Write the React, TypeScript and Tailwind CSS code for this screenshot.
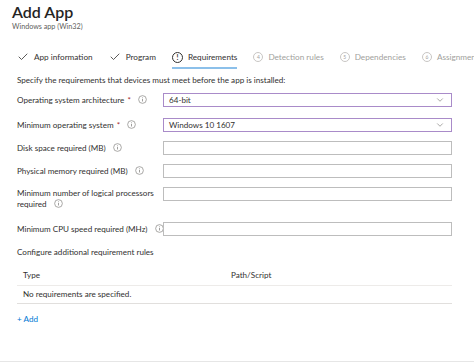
import { Check, ChevronDown } from "lucide-react";

const font = { fontFamily: '"Segoe UI", "Lato", "Noto Sans", sans-serif' };

function InfoIcon() {
  return (
    <svg width="9" height="9" viewBox="0 0 10 10" className="ml-[7px] inline-block shrink-0 align-[-1px]">
      <circle cx="5" cy="5" r="4.3" fill="none" stroke="#8a8886" strokeWidth="0.8" />
      <line x1="5" y1="4.3" x2="5" y2="7.2" stroke="#8a8886" strokeWidth="0.9" />
      <circle cx="5" cy="3" r="0.55" fill="#8a8886" />
    </svg>
  );
}

function StepCircle({ n }: { n: string }) {
  return (
    <span className="flex h-[10px] w-[10px] items-center justify-center rounded-full border border-[#c8c6c4] text-[5px] leading-none text-[#a19f9d]">
      {n}
    </span>
  );
}

function Tab({
  icon,
  label,
  active,
  muted,
}: {
  icon: React.ReactNode;
  label: string;
  active?: boolean;
  muted?: boolean;
}) {
  return (
    <div className="relative flex shrink-0 items-center gap-[5px] whitespace-nowrap">
      {icon}
      <span className={muted ? "text-[#a19f9d]" : "text-[#323130]"}>{label}</span>
      {active && (
        <span className="absolute -bottom-[5px] left-0 right-0 h-[2px] bg-[#8cc0ea]" />
      )}
    </div>
  );
}

function Row({
  label,
  required,
  field,
  className = "",
}: {
  label: string;
  required?: boolean;
  field: React.ReactNode;
  className?: string;
}) {
  return (
    <div className={`flex items-center ${className}`}>
      <div className="flex w-[146px] items-center whitespace-nowrap">
        <span>{label}</span>
        {required && <span className="ml-[3px] text-[#a4262c]">*</span>}
        <InfoIcon />
      </div>
      <div className="flex-1">{field}</div>
    </div>
  );
}

function Select({ value }: { value: string }) {
  return (
    <div className="flex h-[14px] items-center justify-between border border-[#a98bc9] pl-[5px] pr-[6px] text-[#323130]">
      <span>{value}</span>
      <ChevronDown size={10} strokeWidth={1.3} color="#605e5c" />
    </div>
  );
}

function Input() {
  return <div className="h-[14px] border border-[#bdbdbd] bg-white" />;
}

export default function App() {
  return (
    <div
      className="relative h-[363px] w-[474px] overflow-hidden bg-white text-[8.1px] text-[#323130]"
      style={font}
    >
      <div className="pl-[12px] pt-[2px]">
        <h1 className="text-[16px] font-semibold leading-[20px] text-[#252423]">Add App</h1>
        <p className="text-[7.2px] leading-[10px] text-[#605e5c]">Windows app (Win32)</p>
      </div>

      <div className="mt-[19px] flex h-[13px] items-center gap-[16px] pl-[17px] text-[8.2px]">
        <Tab icon={<Check size={12} strokeWidth={1.6} color="#323130" />} label="App information" />
        <Tab icon={<Check size={12} strokeWidth={1.6} color="#323130" />} label="Program" />
        <Tab
          active
          icon={
            <span className="flex h-[11px] w-[11px] items-center justify-center rounded-full border border-[#323130] text-[7px] font-bold leading-none">
              !
            </span>
          }
          label="Requirements"
        />
        <Tab muted icon={<StepCircle n="4" />} label="Detection rules" />
        <Tab muted icon={<StepCircle n="5" />} label="Dependencies" />
        <Tab muted icon={<StepCircle n="6" />} label="Assignments" />
      </div>

      <div className="w-[452px] pl-[17px]">
        <p className="mt-[10px] leading-[12px]">
          Specify the requirements that devices must meet before the app is installed:
        </p>

        <Row className="mt-[7px]" label="Operating system architecture" required field={<Select value="64-bit" />} />
        <Row className="mt-[11px]" label="Minimum operating system" required field={<Select value="Windows 10 1607" />} />
        <Row className="mt-[9px]" label="Disk space required (MB)" field={<Input />} />
        <Row className="mt-[9px]" label="Physical memory required (MB)" field={<Input />} />

        <div className="mt-[9px] flex items-start">
          <div className="w-[146px] pt-[1px] leading-[11px]">
            Minimum number of logical processors
            <br />
            required
            <InfoIcon />
          </div>
          <div className="flex-1">
            <Input />
          </div>
        </div>

        <Row className="mt-[12px]" label="Minimum CPU speed required (MHz)" field={<Input />} />

        <p className="mt-[10px] leading-[12px]">Configure additional requirement rules</p>

        <div className="mt-[8px]">
          <div className="flex h-[20px] items-center border-b border-[#edebe9] pl-[6px]">
            <span className="w-[208px]">Type</span>
            <span>Path/Script</span>
          </div>
          <div className="flex h-[18px] items-center border-b border-[#e1dfdd] pl-[6px]">
            No requirements are specified.
          </div>
        </div>

        <p className="mt-[9px] leading-[12px] text-[#0078d4]">+ Add</p>
      </div>

      <div className="absolute bottom-[1px] left-0 right-0 h-px bg-[#e6e6e6]" />
    </div>
  );
}
